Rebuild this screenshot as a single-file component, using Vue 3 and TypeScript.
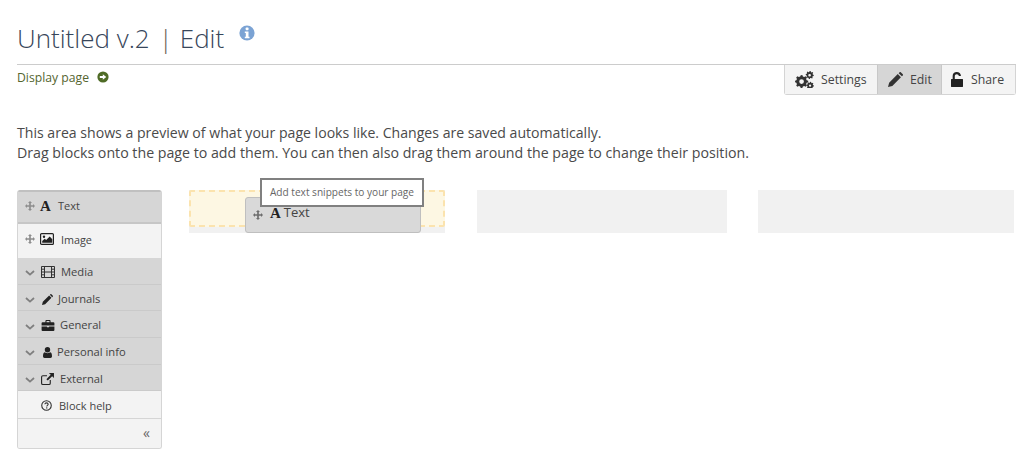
<script setup lang="ts">
const categories = [
  { name: 'Media', icon: 'film', gap: 6 },
  { name: 'Journals', icon: 'pencil', gap: 3 },
  { name: 'General', icon: 'case', gap: 5 },
  { name: 'Personal info', icon: 'user', gap: 2 },
  { name: 'External', icon: 'ext', gap: 5 },
]
const moveD = 'M6 0l2.400 2.400H7v2.600h2.600V3.600L12 6 9.600 8.400V7H7v2.600h1.400L6 12 3.600 9.600H5V7H2.400v1.400L0 6l2.400-2.400V5H5V2.400H3.600z'
</script>

<template>
  <div class="page">
    <header class="head">
      <h1 class="title">
        <span>Untitled v.2</span><span class="bar">|</span><span>Edit</span>
        <svg class="info" viewBox="0 0 16 16" width="16" height="16" aria-hidden="true">
          <circle cx="8" cy="8" r="7.600" fill="#7ba3d4" />
          <rect x="6.700" y="2.600" width="2.800" height="2.600" rx=".6" fill="#fff" />
          <path d="M5.800 6.400h3.700v5.300h1v1.600H5.800v-1.600h1V8h-1z" fill="#fff" />
        </svg>
      </h1>
    </header>

    <div class="toolbar">
      <a class="display">
        Display page
        <svg viewBox="0 0 12 12" width="12" height="12" aria-hidden="true">
          <circle cx="6" cy="6" r="5.600" fill="#4f6b26" />
          <path d="M2.800 5.100h3V3.200L9.300 6 5.800 8.800V6.900h-3z" fill="#fff" />
        </svg>
      </a>
      <div class="btns">
        <button class="btn btn-settings">
          <svg viewBox="0 0 20 18" width="19" height="17" aria-hidden="true">
            <g fill="#333">
              <path fill-rule="evenodd" d="M6 4.500l1.700-.3.6 1.600 1.400.6 1.500-.8 1.300 1.300-.8 1.500.6 1.400 1.600.6V12l-1.600.5-.6 1.400.8 1.500-1.300 1.300-1.500-.8-1.400.6-.6 1.500H6l-.6-1.500-1.400-.6-1.500.8-1.300-1.300.8-1.500-.6-1.400L0 12v-1.600l1.400-.6.6-1.400-.8-1.500 1.300-1.300 1.500.8 1.400-.6zM6.900 8.700a2.500 2.500 0 100 5 2.500 2.500 0 000-5z" />
              <path fill-rule="evenodd" d="M15.500 0l1 .1.3 1 .8.4 1-.4.6.8-.6.9.2.9 1 .5-.1 1-1 .3-.4.8.4 1-.8.6-.9-.6-.9.2-.5 1-1-.1-.3-1-.8-.4-1 .4-.6-.8.6-.9-.2-.9-1-.5.1-1 1-.3.4-.8-.4-1 .8-.6.9.6.9-.2zM15.400 3.100a1.400 1.400 0 100 2.800 1.400 1.400 0 000-2.800z" />
              <path fill-rule="evenodd" d="M16 11.500l1 .1.2.9.7.4.9-.4.6.8-.6.8.2.8.9.5-.1 1-.9.2-.4.7.4.9-.8.6-.8-.6-.8.2-.5.9-1-.1-.2-.9-.7-.4-.9.4-.6-.8.6-.8-.2-.8-.9-.5.1-1 .9-.2.4-.7-.4-.9.8-.6.8.6.8-.2zM15.900 14.300a1.200 1.200 0 100 2.400 1.200 1.200 0 000-2.400z" />
            </g>
          </svg>
          Settings
        </button>
        <button class="btn active btn-edit">
          <svg viewBox="0 0 16 16" width="15" height="15" aria-hidden="true">
            <path d="M0 16l1.200-4.600L10.400 2.200l3.400 3.400-9.200 9.200zM11.400 1.200l1-1c.4-.3.9-.3 1.200 0l2.200 2.200c.3.3.3.8 0 1.200l-1 1z" fill="#333" />
          </svg>
          Edit
        </button>
        <button class="btn btn-share">
          <svg viewBox="0 0 13 16" width="12" height="15" aria-hidden="true">
            <path d="M0 7.500h1.800V4.300C1.800 1.800 3.600 0 6.200 0s4.400 1.700 4.600 4.200H8.500C8.300 3 7.500 2.200 6.200 2.200 4.900 2.200 4.100 3 4.100 4.300v3.200H12.500c.3 0 .5.2.5.5V15.500c0 .3-.2.500-.5.500H.5c-.3 0-.5-.2-.5-.5V8c0-.3.2-.5.500-.5z" fill="#222" />
          </svg>
          Share
        </button>
      </div>
    </div>

    <div class="intro">
      <p class="line-one">This area shows a preview of what your page looks like. Changes are saved automatically.</p>
      <p>Drag blocks onto the page to add them. You can then also drag them around the page to change their position.</p>
    </div>

    <div class="editor">
      <aside class="palette">
        <div class="row block selected">
          <svg class="move" viewBox="0 0 12 12" width="10" height="10" aria-hidden="true"><path :d="moveD" fill="#8d8d8d" /></svg>
          <span class="glyph-a">A</span>
          <span class="label t-text">Text</span>
        </div>
        <div class="row block light">
          <svg class="move" viewBox="0 0 12 12" width="10" height="10" aria-hidden="true"><path :d="moveD" fill="#8d8d8d" /></svg>
          <svg viewBox="0 0 14 12" width="14" height="12" aria-hidden="true">
            <rect x=".6" y=".6" width="12.800" height="10.800" rx="1" fill="none" stroke="#222" stroke-width="1.200" />
            <path d="M2.200 9.800V8l2.500-2.300 1.500 1.400 3.500-3.500 2.600 2.600v3.600z" fill="#222" />
            <circle cx="4" cy="3.700" r="1.200" fill="#222" />
          </svg>
          <span class="label t-image">Image</span>
        </div>

        <div v-for="c in categories" :key="c.name" class="row cat">
          <svg class="chev" viewBox="0 0 10 6" width="10" height="6" aria-hidden="true">
            <path d="M1 1l4 3.600L9 1" fill="none" stroke="#7f7f7f" stroke-width="1.800" />
          </svg>
          <span class="cat-icon">
            <svg v-if="c.icon === 'film'" viewBox="0 0 14 12" width="14" height="12" aria-hidden="true">
              <path d="M.5.5h13v11H.5zM3.500.5v11M10.500.5v11M.5 3.200h3M.5 6h3M.5 8.800h3M10.500 3.200h3M10.500 6h3M10.500 8.800h3M3.500 6h7" fill="none" stroke="#333" stroke-width="1" />
            </svg>
            <svg v-else-if="c.icon === 'pencil'" viewBox="0 0 16 16" width="11" height="11" aria-hidden="true">
              <path d="M0 16l1.200-4.600L10.400 2.200l3.400 3.400-9.200 9.200zM11.400 1.200l1-1c.4-.3.9-.3 1.200 0l2.200 2.200c.3.3.3.8 0 1.200l-1 1z" fill="#222" />
            </svg>
            <svg v-else-if="c.icon === 'case'" viewBox="0 0 14 12" width="14" height="11" aria-hidden="true">
              <path d="M4.200 2.500V1c0-.5.4-.9.9-.9h3.800c.5 0 .9.4.9.9v1.500H13c.6 0 1 .4 1 1V6H0V3.500c0-.6.4-1 1-1zM5.400 1.200v1.300h3.200V1.200zM0 7h5.800v1h2.400V7H14v4c0 .6-.4 1-1 1H1c-.6 0-1-.4-1-1z" fill="#222" />
            </svg>
            <svg v-else-if="c.icon === 'user'" viewBox="0 0 10 12" width="9" height="11" aria-hidden="true">
              <circle cx="5" cy="3" r="3" fill="#222" />
              <path d="M1.800 5.800C3 7 7 7 8.200 5.800 9.400 6.300 10 7.800 10 10.200c0 1.200-.7 1.800-1.700 1.800H1.700C.7 12 0 11.400 0 10.200c0-2.400.6-3.900 1.800-4.400z" fill="#222" />
            </svg>
            <svg v-else viewBox="0 0 14 13" width="13" height="12" aria-hidden="true">
              <path d="M10 7.500V11c0 .8-.6 1.400-1.400 1.400H2c-.8 0-1.400-.6-1.400-1.400V4.400C.6 3.600 1.200 3 2 3h4.500" fill="none" stroke="#222" stroke-width="1.200" />
              <path d="M8.500 0H14v5.500l-2-2L7.300 8.200 5.800 6.700 10.500 2z" fill="#222" />
            </svg>
          </span>
          <span class="label cat-label" :style="{ marginLeft: c.gap + 'px' }">{{ c.name }}</span>
        </div>

        <div class="row help">
          <svg viewBox="0 0 12 12" width="11" height="11" aria-hidden="true">
            <circle cx="6" cy="6" r="5.200" fill="none" stroke="#333" stroke-width="1.200" />
            <path d="M4.200 4.600C4.300 3.600 5 3.100 6 3.100c1.100 0 1.800.6 1.800 1.500 0 1.300-1.500 1.200-1.500 2.500" fill="none" stroke="#333" stroke-width="1.200" />
            <rect x="5.600" y="8" width="1.300" height="1.300" fill="#333" />
          </svg>
          <span class="label">Block help</span>
        </div>
        <div class="row collapse"><span>«</span></div>
      </aside>

      <div class="columns">
        <div class="col col-first">
          <div class="dropzone"></div>
          <div class="ghost">
            <svg viewBox="0 0 12 12" width="10" height="10" aria-hidden="true"><path :d="moveD" fill="#6d6d6d" /></svg>
            <span class="ghost-a">A</span>
            <span class="ghost-text">Text</span>
          </div>
          <div class="tip">Add text snippets to your page</div>
        </div>
        <div class="col col-second"></div>
        <div class="col col-third"></div>
      </div>
    </div>
  </div>
</template>

<style scoped>
.page {
  width: 1024px;
  height: 463px;
  overflow: hidden;
  box-sizing: border-box;
  padding: 0 8px 0 17px;
  font-family: "Open Sans", sans-serif;
  color: #444;
  background: #fff;
}
.head {
  height: 64px;
  border-bottom: 1px solid #ccc;
}
.title {
  margin: 0;
  padding-top: 20px;
  display: flex;
  align-items: flex-start;
  font-size: 26px;
  font-weight: 300;
  line-height: 36px;
  color: #37465a;
}
.bar {
  margin: 0 7px 0 9px;
  color: #6b6255;
}
.info {
  margin: 5px 0 0 15px;
}
.toolbar {
  display: flex;
  justify-content: space-between;
  height: 30px;
}
.display {
  display: flex;
  align-items: center;
  gap: 8px;
  height: 24px;
  font-size: 12.200px;
  color: #55652f;
}
.btns {
  display: flex;
  height: 30px;
  box-sizing: border-box;
  border: 1px solid #d4d4d4;
  border-top: 0;
  border-radius: 0 0 3px 3px;
}
.btn {
  display: flex;
  align-items: center;
  padding: 0;
  border: 0;
  background: #f4f4f4;
  font: 12.300px "Open Sans", sans-serif;
  color: #444;
}
.btn-settings {
  width: 92px;
  padding-left: 10px;
  gap: 7px;
}
.btn-edit {
  width: 65px;
  padding-left: 10px;
  gap: 7px;
}
.btn-share {
  flex: 1;
  width: 73px;
  padding-left: 9px;
  gap: 8px;
}
.active {
  background: #d6d6d6;
  border-left: 1px solid #c8c8c8;
  border-right: 1px solid #c8c8c8;
}
.intro {
  margin-top: 28px;
  font-size: 14.200px;
  line-height: 20px;
  color: #4a4a4a;
}
.intro p {
  margin: 0;
}
.intro .line-one {
  font-size: 14.100px;
}
.editor {
  display: flex;
  margin-top: 27px;
  align-items: flex-start;
}
.palette {
  display: flex;
  flex-direction: column;
  width: 145px;
  height: 259px;
  flex: none;
  box-sizing: border-box;
  border: 1px solid #d5d5d5;
  border-top: 0;
  border-radius: 3px;
  overflow: hidden;
  font-size: 11px;
  color: #444;
}
.row {
  display: flex;
  align-items: center;
  box-sizing: border-box;
  flex: none;
}
.block {
  height: 34px;
  padding-left: 7px;
}
.selected {
  background: #d6d6d6;
  border-top: 2px solid #c0c0c0;
  border-bottom: 2px solid #c6c6c6;
  padding-bottom: 2px;
}
.light {
  background: #f3f3f3;
  padding-bottom: 4px;
}
.move {
  margin-right: 5px;
}
.glyph-a {
  font: 700 15px "Liberation Serif", serif;
  color: #222;
  width: 18px;
}
.t-text {
  margin-top: -1px;
}
.t-image {
  margin-left: 7px;
  font-size: 10.800px;
}
.cat {
  height: 26.700px;
  background: #d6d6d6;
  border-bottom: 1px solid #cacaca;
  padding: 1px 0 0 7px;
}
.chev {
  margin-top: 4px;
  margin-right: 5px;
}
.cat-icon {
  display: flex;
  justify-content: center;
  width: 15px;
  margin-top: 2px;
}
.cat-label {
  font-size: 11.200px;
}
.help {
  height: 28px;
  padding: 2px 0 0 23px;
  gap: 7px;
  background: #f3f3f3;
  border-bottom: 1px solid #d5d5d5;
}
.collapse {
  flex: 1;
  justify-content: flex-end;
  padding: 0 11px 2px 0;
  background: #f3f3f3;
  font-size: 14px;
  color: #666;
}
.columns {
  display: flex;
  margin-left: 27px;
}
.col {
  height: 43px;
  background: #f1f1f1;
  position: relative;
}
.col-first {
  width: 256px;
  margin-right: 32px;
}
.col-second {
  width: 250px;
  margin-right: 31px;
}
.col-third {
  width: 256px;
}
.dropzone {
  height: 37px;
  box-sizing: border-box;
  background: #fdf7e3;
  border: 2px dashed #fbe3ae;
  border-radius: 2px;
}
.ghost {
  position: absolute;
  left: 56px;
  top: 7px;
  width: 176px;
  height: 36px;
  box-sizing: border-box;
  background: #d9d9d9;
  border: 1px solid #bfbfbf;
  border-radius: 3px;
  display: flex;
  align-items: center;
  padding: 0 0 0 7px;
  font-size: 13px;
  color: #444;
}
.ghost-a {
  margin-left: 7px;
  margin-top: -3px;
  font: 700 15px "Liberation Serif", serif;
  color: #222;
}
.ghost-text {
  margin-left: 3px;
  margin-top: -6px;
}
.tip {
  position: absolute;
  left: 71px;
  top: -12px;
  width: 164px;
  height: 29px;
  box-sizing: border-box;
  background: #fff;
  border: 2px solid #808080;
  font-size: 10.100px;
  line-height: 25px;
  text-align: center;
  color: #666;
  white-space: nowrap;
}
</style>
